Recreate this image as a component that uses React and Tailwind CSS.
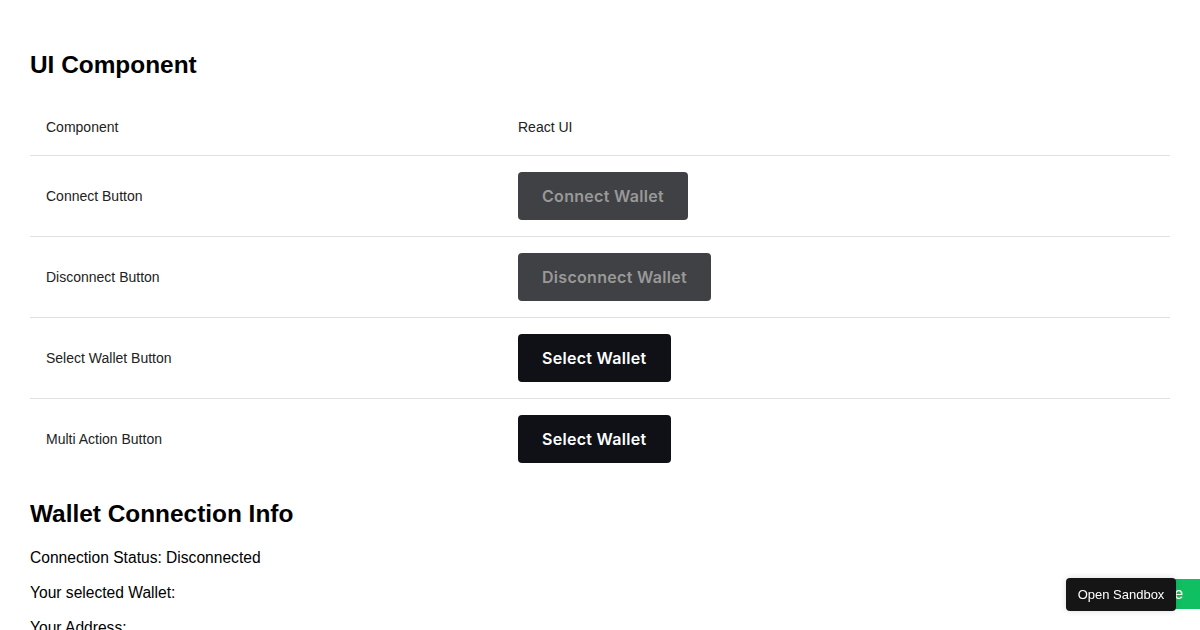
import React from "react";

const rows = [
  { label: "Connect Button", text: "Connect Wallet", disabled: true },
  { label: "Disconnect Button", text: "Disconnect Wallet", disabled: true },
  { label: "Select Wallet Button", text: "Select Wallet" },
  { label: "Multi Action Button", text: "Select Wallet" },
];

function WalletButton({ text, disabled }) {
  return (
    <button
      disabled={disabled}
      className={
        disabled
          ? "h-12 px-6 rounded bg-[#404144] text-[#999999] text-base font-semibold tracking-[0.3px] font-['Inter',sans-serif]"
          : "h-12 px-6 rounded bg-[#0f1117] text-white text-base font-semibold tracking-[0.3px] font-['Inter',sans-serif]"
      }
    >
      {text}
    </button>
  );
}

export default function App() {
  return (
    <div className="relative min-h-[630px] bg-white px-[30px] pt-[51px] font-['Liberation_Sans',Arial,sans-serif] text-black">
      <h2 className="text-[24.4px] leading-7 font-bold mb-6">UI Component</h2>

      <table className="w-full border-collapse text-sm text-[#222]">
        <thead>
          <tr className="border-b border-[#e0e0e0]">
            <th className="w-[472px] px-4 pt-[14px] pb-[18px] text-left font-normal leading-5">Component</th>
            <th className="px-4 pt-[14px] pb-[18px] text-left font-normal leading-5">React UI</th>
          </tr>
        </thead>
        <tbody>
          {rows.map((r, i) => (
            <tr key={i} className={i < rows.length - 1 ? "border-b border-[#e0e0e0]" : ""}>
              <td className="px-4 py-4 align-middle">{r.label}</td>
              <td className="px-4 py-4 align-middle">
                <WalletButton text={r.text} disabled={r.disabled} />
              </td>
            </tr>
          ))}
        </tbody>
      </table>

      <h2 className="mt-[21px] text-[24.4px] leading-7 font-bold">Wallet Connection Info</h2>
      <div className="mt-[18px] flex flex-col gap-[11px] text-[15.6px] leading-6">
        <p>Connection Status: Disconnected</p>
        <p>Your selected Wallet:</p>
        <p>Your Address:</p>
      </div>

      {/* sandbox badge + tooltip */}
      <div className="fixed right-0 top-[579px] h-[30px] w-[90px] rounded-l bg-[#0fbf61] flex items-center justify-end pr-[17px] text-white text-[15px] font-['Inter',sans-serif]">
        e
      </div>
      <div className="fixed left-[1066px] top-[578px] h-[33px] w-[110px] rounded bg-[#151515] text-white text-[13px] flex items-center justify-center shadow-[0_0_6px_rgba(0,0,0,0.15)]">
        Open Sandbox
      </div>
    </div>
  );
}
